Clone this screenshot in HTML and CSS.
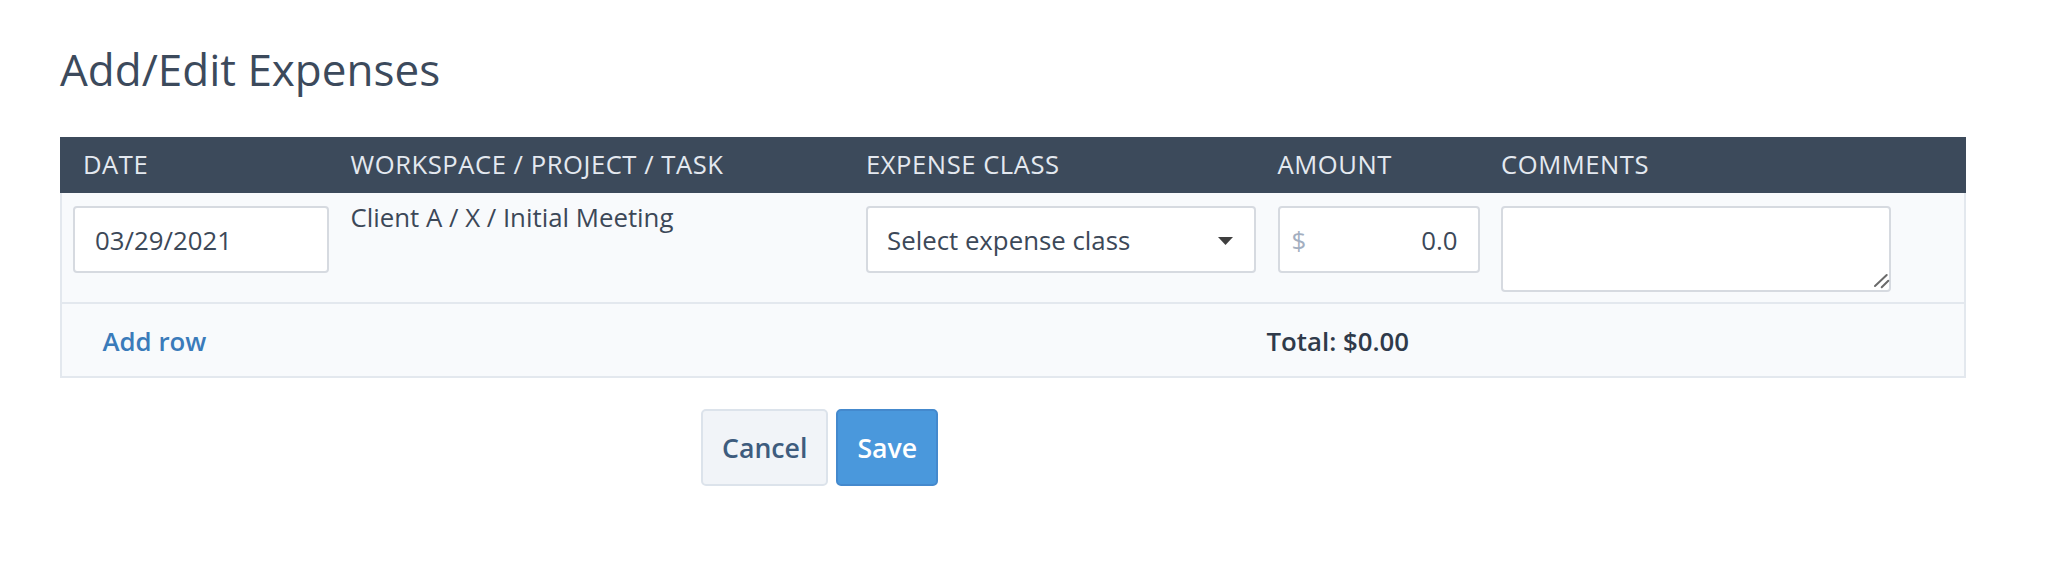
FILE: index.html
```html
<!DOCTYPE html>
<html lang="en">
<head>
<meta charset="utf-8">
<title>Add/Edit Expenses</title>
<link rel="stylesheet" href="styles.css">
</head>
<body>
<div class="page">
  <h1 class="title">Add/Edit Expenses</h1>
  <div class="table">
    <div class="thead grid">
      <div class="th th-date">DATE</div>
      <div class="th">WORKSPACE / PROJECT / TASK</div>
      <div class="th">EXPENSE CLASS</div>
      <div class="th">AMOUNT</div>
      <div class="th">COMMENTS</div>
    </div>
    <div class="tbody">
      <div class="row grid">
        <div class="cell"><input class="field date" type="text" value="03/29/2021"></div>
        <div class="cell cell-text">Client A / X / Initial Meeting</div>
        <div class="cell">
          <div class="field select">
            <span class="select-label">Select expense class</span>
            <svg class="caret" width="15" height="8" viewBox="0 0 15 8"><path d="M0 0 H15 L7.5 8 Z" fill="#3f3f3f"/></svg>
          </div>
        </div>
        <div class="cell">
          <div class="field amount">
            <span class="currency">$</span>
            <input class="amount-input" type="text" value="0.0">
          </div>
        </div>
        <div class="cell">
          <div class="textarea-wrap">
            <textarea class="field comments"></textarea>
            <svg class="grip" width="20" height="20" viewBox="0 0 20 20"><path d="M4 14 L15.7 3 M10.7 15.3 L17.3 8.7" stroke="#6a6a6a" stroke-width="2" stroke-linecap="round" fill="none"/></svg>
          </div>
        </div>
      </div>
      <div class="tfoot grid">
        <a class="add-row" href="#">Add row</a>
        <div class="total">Total: $0.00</div>
      </div>
    </div>
  </div>
  <div class="actions">
    <button class="btn btn-cancel" type="button">Cancel</button>
    <button class="btn btn-save" type="button">Save</button>
  </div>
</div>
</body>
</html>
```

FILE: styles.css
```css
html, body {
  margin: 0;
  padding: 0;
  background: #ffffff;
}

body {
  font-family: "Open Sans", "Noto Sans", sans-serif;
  font-size: 25.8px;
  color: #3c4858;
}

.page {
  padding-left: 60px;
}

.title {
  margin: 39px 0 38px;
  font-size: 44px;
  font-weight: 400;
  line-height: normal;
  color: #3c4a5c;
}

.table {
  width: 1906px;
}

.grid {
  display: grid;
  grid-template-columns: 256px 494px 390px 202px 390px;
  column-gap: 21.5px;
}

.thead {
  background: #3c4a5b;
  height: 56px;
  padding-left: 13px;
  box-sizing: border-box;
}

.th {
  color: #e4e9f0;
  line-height: 56px;
  font-size: 25.6px;
  font-weight: 400;
  letter-spacing: 0.55px;
  white-space: nowrap;
}

.th-date {
  padding-left: 10px;
}

.tbody {
  background: #f8fafc;
  border: 2px solid #e3e8ee;
  border-top: none;
}

.row {
  padding-left: 11px;
  border-bottom: 2px solid #e3e8ee;
  padding-bottom: 10px;
}

.cell {
  padding-top: 13px;
}

.cell-text {
  padding-top: 6px;
  line-height: normal;
  white-space: nowrap;
}

.field {
  box-sizing: border-box;
  background: #ffffff;
  border: 2px solid #d6dae0;
  border-radius: 4px;
  font-family: inherit;
  font-size: 25.8px;
  color: #3c4858;
  outline: none;
}

.date {
  width: 256px;
  height: 67px;
  padding: 0 20px;
  margin: 0;
}

.select {
  height: 67px;
  display: flex;
  align-items: center;
  justify-content: space-between;
  padding: 0 21px 0 19px;
}

.select-label {
  white-space: nowrap;
}

.caret {
  display: block;
  margin-top: 2px;
}

.amount {
  height: 67px;
  display: flex;
  align-items: center;
  padding: 0 20px 0 12px;
}

.currency {
  color: #a3aec0;
}

.amount-input {
  flex: 1;
  min-width: 0;
  border: none;
  background: transparent;
  text-align: right;
  font-family: inherit;
  font-size: 25.8px;
  color: #3c4858;
  padding: 0;
  outline: none;
}

.textarea-wrap {
  position: relative;
  width: 390px;
  height: 86px;
}

.comments {
  display: block;
  width: 390px;
  height: 86px;
  margin: 0;
  padding: 10px 20px;
  resize: none;
}

.grip {
  position: absolute;
  right: 0;
  bottom: 0;
}

.tfoot {
  padding: 20px 0 17px 11px;
  line-height: 35px;
  font-weight: 600;
}

.add-row {
  grid-column: 1;
  padding-left: 29.5px;
  color: #3a7bba;
  text-decoration: none;
}

.total {
  grid-column: 4;
  margin-left: -11px;
  color: #2f3a4a;
  white-space: nowrap;
}

.actions {
  display: flex;
  gap: 8px;
  margin-top: 31px;
  padding-left: 641px;
}

.btn {
  height: 77px;
  box-sizing: border-box;
  padding: 0 19px;
  border-radius: 5px;
  border: 2px solid;
  font-family: "Open Sans", "Noto Sans", sans-serif;
  font-size: 26.7px;
  font-weight: 600;
  line-height: 73px;
  cursor: pointer;
}

.btn-cancel {
  background: #f1f4f8;
  border-color: #dce3eb;
  color: #3e5c7e;
}

.btn-save {
  background: #4a98dc;
  border-color: #4489cd;
  color: #ffffff;
}
```
